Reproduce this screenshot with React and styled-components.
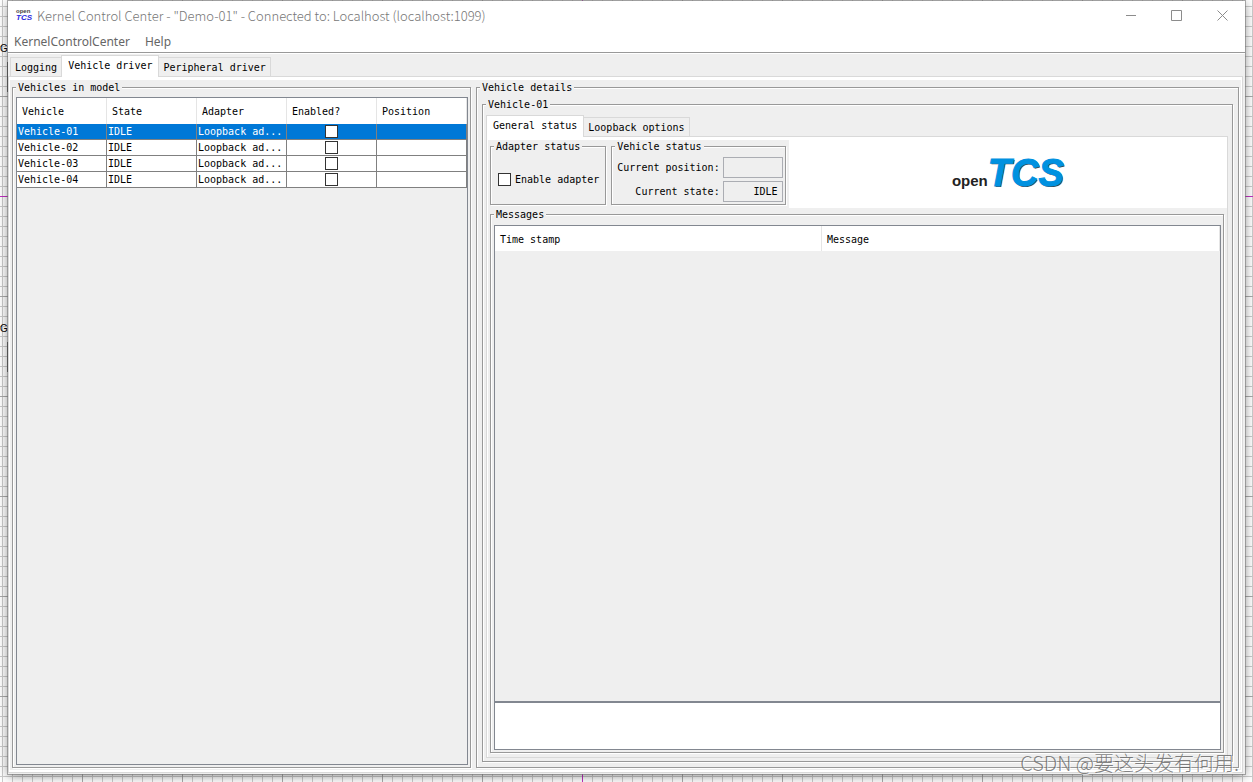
import React, { useState } from "react";
import styled, { createGlobalStyle } from "styled-components";

const Global = createGlobalStyle`
  *, *::before, *::after {
    box-sizing: border-box;
  }
  body, html {
    margin: 0;
    color: #000000;
    font-family: "DejaVu Sans Mono", "Liberation Mono", monospace;
    font-size: 10px;
    line-height: 13px;
  }
  button, input, textarea {
    font: inherit;
    color: inherit;
    margin: 0;
  }
`;

const Desktop = styled.div`
  position: relative;
  display: flex;
  height: 100vh;
  min-height: 480px;
  padding: 1px 8px 8px 8px;
  overflow: hidden;
  background-color: #ffffff;
  background-image:
    linear-gradient(#aaaaaa 1px, transparent 1px),
    linear-gradient(90deg, #aaaaaa 1px, transparent 1px),
    linear-gradient(#cccccc 1px, transparent 1px),
    linear-gradient(90deg, #cccccc 1px, transparent 1px);
  background-size: 100px 100px, 100px 100px, 10px 10px, 10px 10px;
  background-position: 0 96px, 82px 0, 0 6px, 2px 0;
`;

const AxisX = styled.div`
  position: absolute;
  left: 0;
  right: 0;
  top: 196px;
  height: 1px;
  background: #c030c0;
`;

const AxisY = styled.div`
  position: absolute;
  top: 0;
  bottom: 0;
  left: 582px;
  width: 1px;
  background: #c030c0;
`;

const CanvasNode = styled.div`
  position: absolute;
  left: 0;
  top: ${props => props.$top}px;
  width: 8px;
  height: 50px;
  font-family: "Liberation Sans", sans-serif;
  font-size: 10px;
  &::after {
    content: "";
    position: absolute;
    right: 0;
    bottom: 0;
    width: 1px;
    height: 30px;
    background: #222222;
  }
`;

const Window = styled.main`
  position: relative;
  display: flex;
  flex-direction: column;
  flex: 1;
  min-width: 0;
  background: #efefef;
  box-shadow: 0 0 0 1px rgba(120, 120, 120, 0.6), 0 2px 10px rgba(0, 0, 0, 0.45);
`;

const TitleBar = styled.header`
  display: flex;
  align-items: center;
  height: 30px;
  padding: 0 0 2px 8px;
  background: #ffffff;
`;

const AppIcon = styled.span`
  display: flex;
  flex-direction: column;
  width: 16px;
  margin-right: 5px;
  font-family: "Liberation Sans", sans-serif;
  font-weight: bold;
  font-size: 6px;
  line-height: 5px;
  color: #444444;
  b {
    font-size: 8px;
    line-height: 7px;
    font-style: italic;
    color: #2a2ae0;
  }
`;

const Title = styled.h1`
  flex: 1;
  margin: 0;
  font-family: "Noto Sans CJK SC", "Noto Sans", sans-serif;
  font-size: 13px;
  font-weight: 300;
  color: #777777;
`;

const WindowButton = styled.button`
  display: flex;
  align-items: center;
  justify-content: center;
  width: 46px;
  height: 28px;
  padding: 0;
  border: 0;
  background: transparent;
  color: #8c8c8c;
`;

const MenuBar = styled.nav`
  display: flex;
  gap: 15px;
  height: 23px;
  padding: 2px 6px;
  background: #ffffff;
  border-bottom: 1px solid #ffffff;
  box-shadow: inset 0 -1px 0 #999999;
`;

const MenuItem = styled.button`
  padding: 0;
  border: 0;
  background: transparent;
  font-family: "Noto Sans", "Open Sans", sans-serif;
  font-size: 12px;
  line-height: 16px;
  color: #666666;
`;

const TabBar = styled.div`
  display: flex;
  align-items: flex-end;
  padding-left: ${props => props.$indent}px;
`;

const Tab = styled.button`
  height: ${props => (props.$active ? 22 : 19)}px;
  margin-bottom: ${props => (props.$active ? -1 : 0)}px;
  padding: ${props => (props.$active ? "0 6px 2px" : "1px 4px 0")};
  border: 1px solid #d9d9d9;
  border-bottom: 0;
  margin-left: -1px;
  background: ${props => (props.$active ? "#ffffff" : "#efefef")};
  z-index: ${props => (props.$active ? 1 : 0)};
  white-space: nowrap;
`;

const TabPane = styled.div`
  display: flex;
  flex-direction: column;
  flex: 1;
  min-height: 0;
  border: 1px solid #d9d9d9;
  background: #ffffff;
`;

const MainPane = styled(TabPane)`
  margin: 0 2px 1px 0;
  padding: 3px 1px 2px 1px;
`;

const MainTabs = styled.div`
  display: flex;
  flex-direction: column;
  flex: 1;
  min-height: 0;
  padding-top: 1px;
`;

const SplitPane = styled.div`
  display: grid;
  grid-template-columns: 459px minmax(0, 1fr);
  gap: 5px;
  flex: 1;
  min-height: 0;
  padding: 1px 2px 2px 2px;
  background: #efefef;
`;

const Group = styled.fieldset`
  display: flex;
  flex-direction: column;
  min-width: 0;
  min-height: 0;
  margin: 0;
  padding: ${props => props.$pad};
  border: 1px solid #999999;
  box-shadow: 1px 1px 0 #ffffff, inset 1px 1px 0 #ffffff;
  > legend {
    height: 13px;
    margin-left: ${props => props.$shift || 0}px;
    padding: 0 2px;
    background: #efefef;
  }
`;

const FillGroup = styled(Group)`
  flex: 1;
`;

const ScrollBox = styled.div`
  flex: 1;
  min-height: 0;
  border: 1px solid #828790;
  background: #efefef;
`;

const Table = styled.table`
  width: 100%;
  table-layout: fixed;
  border-collapse: separate;
  border-spacing: 0;
  th {
    height: ${props => props.$headHeight}px;
    padding: 1px 5px 0;
    border-right: 1px solid #e5e5e5;
    background: #ffffff;
    font-weight: normal;
    text-align: left;
  }
`;

const VehicleRow = styled.tr`
  background: ${props => (props.$selected ? "#0078d7" : "#ffffff")};
  color: ${props => (props.$selected ? "#ffffff" : "#000000")};
  td {
    height: 16px;
    padding: 0 1px;
    border-right: 1px solid #808080;
    border-bottom: 1px solid #808080;
    overflow: hidden;
    white-space: nowrap;
    line-height: 13px;
  }
`;

const CheckBox = styled.input`
  appearance: none;
  display: block;
  flex: none;
  width: 13px;
  height: 13px;
  margin: 0 auto;
  border: 1px solid #333333;
  background: #ffffff;
  &:checked {
    background: #333333;
    box-shadow: inset 0 0 0 2px #ffffff;
  }
`;

const StatusBar = styled.div`
  display: flex;
  height: 68px;
`;

const StatusGroups = styled.div`
  display: flex;
  gap: 5px;
  padding: 0 3px 3px 2px;
  background: #efefef;
`;

const AdapterLabel = styled.label`
  display: flex;
  align-items: center;
  gap: 4px;
  flex: 1;
  padding-top: 2px;
  white-space: nowrap;
`;

const Fields = styled.div`
  display: grid;
  grid-template-columns: auto 60px;
  grid-auto-rows: 21px;
  align-items: center;
  gap: 3px;
  text-align: right;
`;

const Field = styled.input`
  width: 60px;
  height: 21px;
  padding: 0 4px;
  border: 1px solid #abadb3;
  background: #efefef;
  text-align: right;
`;

const Logo = styled.div`
  display: flex;
  flex: 1;
  align-items: baseline;
  justify-content: center;
  padding-top: 12px;
  font-family: "Liberation Sans", sans-serif;
  font-size: 15px;
  font-weight: bold;
  line-height: 42px;
  color: #222222;
  em {
    font-size: 38px;
    color: #0091e0;
    -webkit-text-stroke: 1px #0091e0;
    text-shadow: 1px 1px 0 #444444;
  }
`;

const InnerPanel = styled.div`
  display: flex;
  flex-direction: column;
  flex: 1;
  min-height: 0;
  padding: 3px 0 0 1px;
`;

const MessagesArea = styled.div`
  display: flex;
  flex: 1;
  min-height: 0;
  padding: 0 3px 4px 2px;
  background: #efefef;
`;

const MessageDetail = styled.textarea`
  height: 48px;
  border: 1px solid #828790;
  border-radius: 0;
  background: #ffffff;
  resize: none;
`;

const Watermark = styled.div`
  position: absolute;
  right: 14px;
  bottom: 6px;
  font-family: "Noto Sans CJK SC", sans-serif;
  font-size: 20px;
  font-weight: 300;
  line-height: 26px;
  color: rgba(90, 90, 90, 0.75);
  text-shadow: 1px 1px 0 rgba(255, 255, 255, 0.7);
`;

const vehicles = ["Vehicle-01", "Vehicle-02", "Vehicle-03", "Vehicle-04"];

const GeneralStatus = () => (
  <InnerPanel>
    <StatusBar>
      <StatusGroups>
        <Group $pad="0 6px 0 7px" $shift={-4}>
          <legend>Adapter status</legend>
          <AdapterLabel>
            <CheckBox type="checkbox" />
            Enable adapter
          </AdapterLabel>
        </Group>
        <Group $pad="4px 2px 2px 5px" $shift={-2}>
          <legend>Vehicle status</legend>
          <Fields>
            <label htmlFor="position">Current position:</label>
            <Field id="position" readOnly value="" />
            <label htmlFor="state">Current state:</label>
            <Field id="state" readOnly value="IDLE" />
          </Fields>
        </Group>
      </StatusGroups>
      <Logo>open<em>TCS</em></Logo>
    </StatusBar>
    <MessagesArea>
      <FillGroup $pad="4px 2px 2px 3px">
        <legend>Messages</legend>
        <ScrollBox>
          <Table $headHeight={25}>
            <colgroup>
              <col width="327" />
              <col />
            </colgroup>
            <thead>
              <tr>
                <th>Time stamp</th>
                <th>Message</th>
              </tr>
            </thead>
          </Table>
        </ScrollBox>
        <MessageDetail aria-label="Message text" readOnly />
      </FillGroup>
    </MessagesArea>
  </InnerPanel>
);

const App = () => {
  const [selected, setSelected] = useState(vehicles[0]);

  return (
    <Desktop>
      <Global />
      <AxisX />
      <AxisY />
      <CanvasNode $top={42}>G</CanvasNode>
      <CanvasNode $top={322}>G</CanvasNode>
      <Window>
        <TitleBar>
          <AppIcon>open<b>TCS</b></AppIcon>
          <Title>Kernel Control Center - "Demo-01" - Connected to: Localhost (localhost:1099)</Title>
          <WindowButton aria-label="Minimize">
            <svg width="11" height="11" stroke="currentColor"><path d="M1 5.5H11" /></svg>
          </WindowButton>
          <WindowButton aria-label="Maximize">
            <svg width="11" height="11" stroke="currentColor" fill="none"><path d="M.5 .5H10.500V10.500H.5Z" /></svg>
          </WindowButton>
          <WindowButton aria-label="Close">
            <svg width="11" height="11" stroke="currentColor"><path d="M.5 .5L10.500 10.500M10.500 .5L.5 10.500" /></svg>
          </WindowButton>
        </TitleBar>
        <MenuBar>
          <MenuItem>KernelControlCenter</MenuItem>
          <MenuItem>Help</MenuItem>
        </MenuBar>
        <MainTabs>
          <TabBar $indent={3}>
            <Tab>Logging</Tab>
            <Tab $active>Vehicle driver</Tab>
            <Tab>Peripheral driver</Tab>
          </TabBar>
          <MainPane>
            <SplitPane>
              <Group $pad="3px 2px 2px 3px">
                <legend>Vehicles in model</legend>
                <ScrollBox>
                  <Table $headHeight={26}>
                    <thead>
                      <tr>
                        <th>Vehicle</th>
                        <th>State</th>
                        <th>Adapter</th>
                        <th>Enabled?</th>
                        <th>Position</th>
                      </tr>
                    </thead>
                    <tbody>
                      {vehicles.map(name => (
                        <VehicleRow
                          key={name}
                          $selected={name === selected}
                          onClick={() => setSelected(name)}
                        >
                          <td>{name}</td>
                          <td>IDLE</td>
                          <td>Loopback ad...</td>
                          <td><CheckBox type="checkbox" aria-label={`Enable ${name}`} /></td>
                          <td></td>
                        </VehicleRow>
                      ))}
                    </tbody>
                  </Table>
                </ScrollBox>
              </Group>
              <Group $pad="4px 5px 5px 5px" $shift={-2}>
                <legend>Vehicle details</legend>
                <FillGroup $pad="4px 4px 3px 3px">
                  <legend>{selected}</legend>
                  <TabBar $indent={1}>
                    <Tab $active>General status</Tab>
                    <Tab>Loopback options</Tab>
                  </TabBar>
                  <TabPane>
                    <GeneralStatus />
                  </TabPane>
                </FillGroup>
              </Group>
            </SplitPane>
          </MainPane>
        </MainTabs>
      </Window>
      <Watermark>CSDN @要这头发有何用.</Watermark>
    </Desktop>
  );
};

export default App;
